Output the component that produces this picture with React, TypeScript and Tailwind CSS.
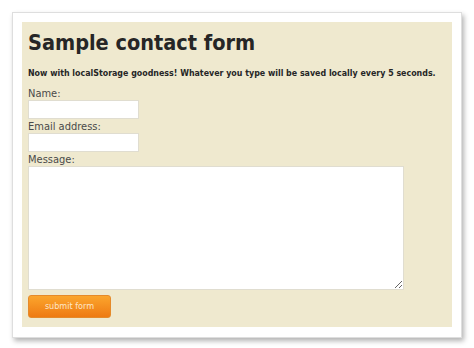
export default function App() {
  const f = { fontFamily: '"DejaVu Sans Condensed", "DejaVu Sans", sans-serif' };
  return (
    <div className="w-[474px] h-[348px] bg-white pt-[12px] pl-[12px]" style={f}>
      <div className="w-[450px] h-[326px] bg-white border border-[#dedede] shadow-[2px_3px_5px_rgba(0,0,0,0.3)] pt-[9px] px-[9px] pb-[10px]">
        <div className="h-full bg-[#efe9cf] pl-[6px] pt-[8px] flex flex-col items-start">
          <h1 className="text-[21.5px] leading-[26px] font-bold text-[#262626]">Sample contact form</h1>
          <p className="mt-[11px] text-[8.8px] leading-[12px] font-bold text-[#262626] whitespace-nowrap">
            Now with localStorage goodness! Whatever you type will be saved locally every 5 seconds.
          </p>
          <label className="mt-[8px] text-[11px] leading-[13px] text-[#4a4a4a]">Name:</label>
          <input className="w-[111px] h-[19px] bg-white border border-[#e0ddd0]" />
          <label className="mt-[1px] text-[11px] leading-[13px] text-[#4a4a4a]">Email address:</label>
          <input className="w-[111px] h-[19px] bg-white border border-[#e0ddd0]" />
          <label className="mt-[1px] text-[11px] leading-[13px] text-[#4a4a4a]">Message:</label>
          <textarea className="w-[376px] h-[124px] bg-white border border-[#e0ddd0]" />
          <button className="mt-[5px] w-[83px] h-[23px] rounded-[3px] bg-gradient-to-b from-[#fba52c] to-[#ee7a12] border border-[#e58a2a] text-[9px] text-[#fde6c6]">
            submit form
          </button>
        </div>
      </div>
    </div>
  );
}
